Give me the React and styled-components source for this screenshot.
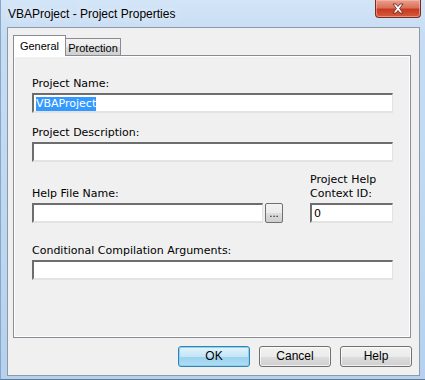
import React from "react";
import styled, { createGlobalStyle } from "styled-components";

const GlobalStyle = createGlobalStyle`
  html, body {
    margin: 0;
    padding: 0;
    background: #ffffff;
  }
  #root {
    width: 425px;
    height: 380px;
  }
`;

const labelFont = `"DejaVu Sans", "Liberation Sans", sans-serif`;

const Frame = styled.div`
  box-sizing: border-box;
  width: 425px;
  height: 380px;
  display: flex;
  flex-direction: column;
  padding: 0 5px 3px 6px;
  background: linear-gradient(180deg, #d3e5f7 0%, #c6dcf3 10%, #bed7f1 60%, #b5d1ee 100%);
  border-left: 1px solid #8aa6c6;
  border-bottom: 1px solid #5f7896;
`;

const TitleBar = styled.div`
  height: 27px;
  display: flex;
  align-items: flex-start;
  justify-content: space-between;
`;

const Title = styled.div`
  padding: 6px 0 0 1px;
  font-family: "Liberation Sans", Arial, sans-serif;
  font-size: 12px;
  line-height: 16px;
  color: #000;
  text-shadow: 0 0 8px rgba(255, 255, 255, 0.9);
`;

const CloseButton = styled.div`
  box-sizing: border-box;
  width: 46px;
  height: 18px;
  margin-right: -1px;
  display: flex;
  align-items: center;
  justify-content: center;
  border: 1px solid #7a2b23;
  border-top: none;
  border-radius: 0 0 4px 4px;
  background: linear-gradient(180deg, #eaa08e 0%, #d9725a 45%, #c83a22 55%, #d65a3a 100%);
  box-shadow: inset 0 0 0 1px rgba(255, 200, 190, 0.5);
`;

const Client = styled.div`
  flex: 1;
  display: flex;
  flex-direction: column;
  background: #f0f0f0;
  border: 1px solid #8d99a6;
  padding: 7px 7px 8px 5px;
`;

const TabStrip = styled.div`
  display: flex;
  align-items: flex-end;
  height: 21px;
  position: relative;
  z-index: 1;
`;

const Tab = styled.div`
  box-sizing: border-box;
  height: ${(p) => (p.$active ? "21px" : "18px")};
  width: ${(p) => (p.$active ? "53px" : "56px")};
  padding-top: ${(p) => (p.$active ? "3px" : "2px")};
  text-align: center;
  border: 1px solid #898c95;
  border-bottom: ${(p) => (p.$active ? "none" : "1px solid #898c95")};
  margin-left: ${(p) => (p.$active ? "0" : "-1px")};
  background: ${(p) =>
    p.$active ? "#ffffff" : "linear-gradient(180deg, #f2f2f2 0%, #ebebeb 50%, #dddddd 51%, #cfcfcf 100%)"};
  font-family: "Liberation Sans", Arial, sans-serif;
  font-size: 11px;
  line-height: 14px;
  color: #000;
  white-space: nowrap;
`;

const Panel = styled.div`
  box-sizing: border-box;
  margin-top: -1px;
  width: 398px;
  height: 283px;
  border: 1px solid #898c95;
  box-shadow: inset 1px 1px 0 #ffffff, inset -1px -1px 0 #ffffff;
  background: #f0f0f0;
  padding: 21px 17px 0 18px;
  display: flex;
  flex-direction: column;
`;

const Field = styled.div`
  display: flex;
  flex-direction: column;
  margin-bottom: ${(p) => p.$gap || "13px"};
`;

const Label = styled.div`
  font-family: ${labelFont};
  font-size: 11px;
  line-height: 14px;
  color: #000;
  margin-bottom: 2px;
`;

const TextBox = styled.div`
  box-sizing: border-box;
  height: 20px;
  width: ${(p) => p.$width || "auto"};
  background: #ffffff;
  border-top: 2px solid #6d6d6d;
  border-left: 2px solid #6d6d6d;
  border-right: 1px solid #e3e3e3;
  border-bottom: 2px solid #e3e3e3;
  padding: 1px 3px 0 2px;
  font-family: ${labelFont};
  font-size: 11px;
  line-height: 15px;
  color: #000;
  display: flex;
  align-items: center;
`;

const Selected = styled.span`
  background: #3399ff;
  color: #ffffff;
  line-height: 14px;
`;

const HelpRow = styled.div`
  display: flex;
  align-items: flex-end;
  justify-content: space-between;
  margin-bottom: 21px;
`;

const HelpLeft = styled.div`
  display: flex;
  flex-direction: column;
`;

const InputWithButton = styled.div`
  display: flex;
  gap: 2px;
  align-items: stretch;
`;

const BrowseButton = styled.div`
  box-sizing: border-box;
  width: 18px;
  height: 20px;
  border: 1px solid #707070;
  border-radius: 2px;
  background: linear-gradient(180deg, #f2f2f2 0%, #ebebeb 50%, #dddddd 51%, #cfcfcf 100%);
  font-family: ${labelFont};
  font-size: 10px;
  line-height: 20px;
  text-align: center;
  color: #000;
`;

const HelpRight = styled.div`
  display: flex;
  flex-direction: column;
  width: 83px;
`;

const ButtonRow = styled.div`
  display: flex;
  justify-content: flex-end;
  gap: 9px;
  margin-top: 8px;
`;

const DialogButton = styled.div`
  box-sizing: border-box;
  width: 72px;
  height: 21px;
  border: 1px solid ${(p) => (p.$default ? "#3c7fb1" : "#707070")};
  border-radius: 3px;
  background: ${(p) =>
    p.$default
      ? "linear-gradient(180deg, #e5f4fc 0%, #c4e5f6 50%, #98d1ef 51%, #b3ddf2 100%)"
      : "linear-gradient(180deg, #f2f2f2 0%, #ebebeb 50%, #dddddd 51%, #cfcfcf 100%)"};
  box-shadow: inset 0 0 0 1px ${(p) => (p.$default ? "#82d5f6" : "rgba(255,255,255,0.7)")};
  font-family: "Liberation Sans", Arial, sans-serif;
  font-size: 12px;
  line-height: 19px;
  text-align: center;
  color: #000;
`;

const CloseIcon = () => (
  <svg width="14" height="11" viewBox="0 0 14 11">
    <path
      d="M2 1 L5 1 L7 3.5 L9 1 L12 1 L8.6 5.5 L12 10 L9 10 L7 7.5 L5 10 L2 10 L5.4 5.5 Z"
      fill="#ffffff"
      stroke="#5a1e16"
      strokeWidth="0.8"
      strokeLinejoin="round"
    />
  </svg>
);

export default function App() {
  return (
    <>
      <GlobalStyle />
      <Frame>
        <TitleBar>
          <Title>VBAProject - Project Properties</Title>
          <CloseButton>
            <CloseIcon />
          </CloseButton>
        </TitleBar>
        <Client>
          <TabStrip>
            <Tab $active>General</Tab>
            <Tab>Protection</Tab>
          </TabStrip>
          <Panel>
            <Field>
              <Label>Project Name:</Label>
              <TextBox>
                <Selected>VBAProject</Selected>
              </TextBox>
            </Field>
            <Field $gap="11px">
              <Label>Project Description:</Label>
              <TextBox />
            </Field>
            <HelpRow>
              <HelpLeft>
                <Label>Help File Name:</Label>
                <InputWithButton>
                  <TextBox $width="231px" />
                  <BrowseButton>...</BrowseButton>
                </InputWithButton>
              </HelpLeft>
              <HelpRight>
                <Label>
                  Project Help
                  <br />
                  Context ID:
                </Label>
                <TextBox>0</TextBox>
              </HelpRight>
            </HelpRow>
            <Field>
              <Label>Conditional Compilation Arguments:</Label>
              <TextBox />
            </Field>
          </Panel>
          <ButtonRow>
            <DialogButton $default>OK</DialogButton>
            <DialogButton>Cancel</DialogButton>
            <DialogButton>Help</DialogButton>
          </ButtonRow>
        </Client>
      </Frame>
    </>
  );
}
